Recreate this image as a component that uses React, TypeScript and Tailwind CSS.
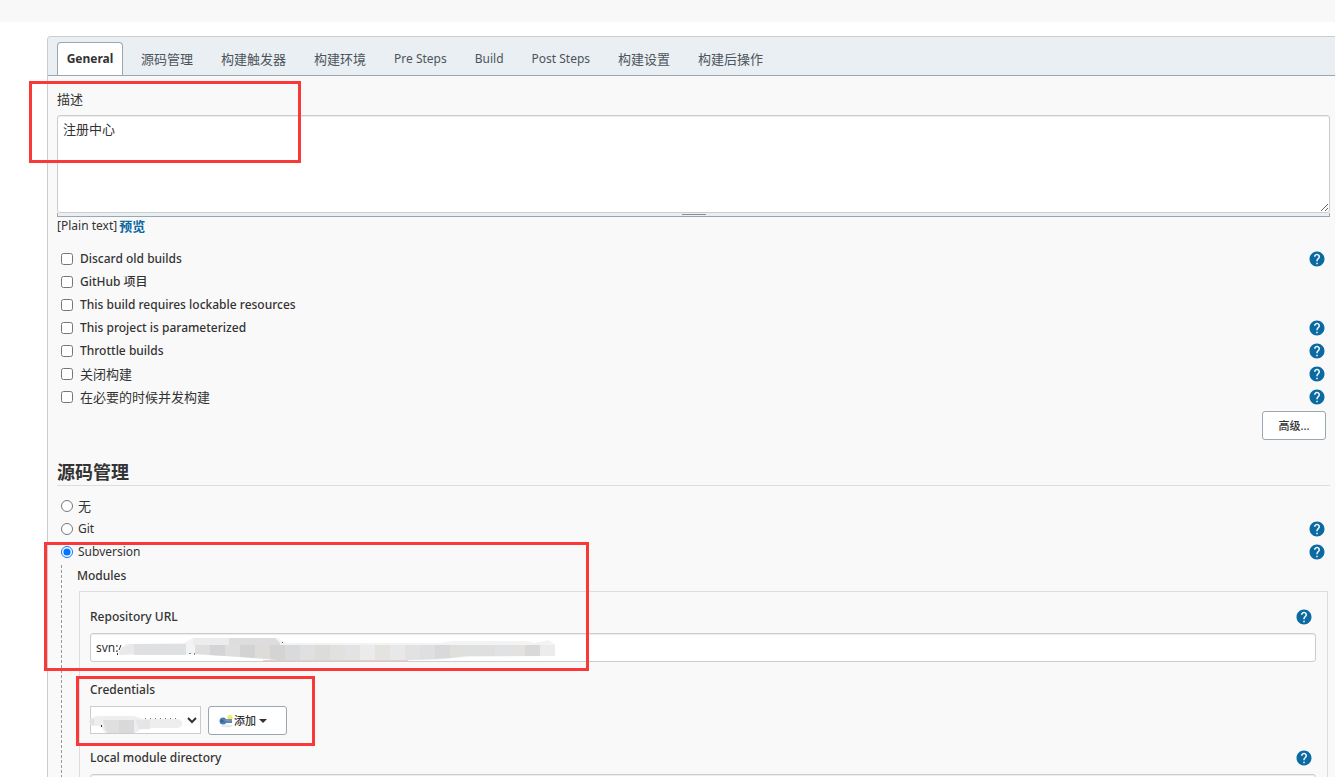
import { MdHelp } from 'react-icons/md';

const tabs = [
  { label: '源码管理', size: 'text-[13px]' },
  { label: '构建触发器', size: 'text-[13px]' },
  { label: '构建环境', size: 'text-[13px]' },
  { label: 'Pre Steps', size: 'text-xs' },
  { label: 'Build', size: 'text-xs' },
  { label: 'Post Steps', size: 'text-xs' },
  { label: '构建设置', size: 'text-[13px]' },
  { label: '构建后操作', size: 'text-[13px]' },
];

const options = [
  { id: 'discard', label: 'Discard old builds', style: 'text-xs font-medium', help: true },
  { id: 'github', label: 'GitHub 项目', style: 'text-xs font-medium', help: false },
  { id: 'lockable', label: 'This build requires lockable resources', style: 'text-xs font-medium', help: false },
  { id: 'parameterized', label: 'This project is parameterized', style: 'text-xs font-medium', help: true },
  { id: 'throttle', label: 'Throttle builds', style: 'text-xs font-medium', help: true },
  { id: 'disable', label: '关闭构建', style: 'text-[13px]', help: true },
  { id: 'concurrent', label: '在必要的时候并发构建', style: 'text-[13px]', help: true },
];

const scms = [
  { id: 'none', label: '无', size: 'text-[13px]', help: false },
  { id: 'git', label: 'Git', size: 'text-xs', help: true },
  { id: 'svn', label: 'Subversion', size: 'text-xs', help: true },
];

function HelpButton({ topic }: { topic: string }) {
  return (
    <button type="button" aria-label={`Help for ${topic}`} className="ml-auto text-[#0b6aa2]">
      <MdHelp className="block size-[18px]" />
    </button>
  );
}

function FieldLabel({ id, label, help = false }: { id: string; label: string; help?: boolean }) {
  return (
    <div className="mb-[5px] flex h-[23px] items-center pr-[3px]">
      <label htmlFor={id} className="text-xs font-medium">
        {label}
      </label>
      {help && <HelpButton topic={label} />}
    </div>
  );
}

function Tabs() {
  return (
    <div className="flex h-[39px] items-end rounded-tl border-b border-[#9aa7b0] bg-[#e9eff2] pl-[9px]">
      <button
        type="button"
        className="h-[33px] w-[66px] rounded-t border border-b-0 border-[#9aa7b0] bg-white text-xs font-bold"
      >
        General
      </button>
      <div className="flex h-[33px] items-center gap-7 pl-[18px] text-[#4d545d]">
        {tabs.map((tab) => (
          <button key={tab.label} type="button" className={tab.size}>
            {tab.label}
          </button>
        ))}
      </div>
    </div>
  );
}

function Description() {
  return (
    <div>
      <label htmlFor="description" className="flex h-[39px] items-center pt-1.5">
        描述
      </label>
      <textarea
        id="description"
        defaultValue="注册中心"
        className="block h-[98px] w-full resize rounded-[3px] border border-[#ccc] bg-white px-[5px] py-[3px] leading-5 shadow-[inset_0_1px_1px_rgba(0,0,0,0.075)]"
      />
      <div className="flex h-1 justify-center border-x border-b border-[#9aa7b0] bg-[#e9eff2]">
        <div className="mt-px h-px w-6 bg-[#888d93]" />
      </div>
      <div className="flex h-[18px] items-center gap-0.5">
        <span className="text-xs">[Plain text]</span>
        <a href="#preview" className="font-bold text-[#0b6aa2]">
          预览
        </a>
      </div>
    </div>
  );
}

function UrlMask() {
  const blocks = [
    '#dedfde', '#d4d4d6', '#dededf', '#d3d3d3', '#dddcd8', '#d4d4d4', '#d8dadb', '#e0e0e2',
    '#dcdcda', '#e0e2df', '#e3e2e5', '#ebebeb', '#e4e3e0', '#e6e8ea', '#e2e2e2', '#dfdfe1',
    '#d9d9db', '#dfdfdb', '#dee0df', '#dfdfdf', '#e1e2e4', '#e3e2e0', '#d9d9d9', '#ececec', '#eeeeee',
  ];
  return (
    <svg aria-hidden="true" className="absolute top-0 left-0" width="480" height="29" viewBox="0 0 480 29">
      <path d="M30 18 L36 11 L94 10 L103 5 L187 5 L197 10 L350 10 L364 8 L435 8 L444 10 L459 7 L465 12 L464 23 L378 24 L345 27 L200 28 L150 24 L97 21 L60 21 L30 22Z" fill="#f3f3f3" />
      <path d="M44 11h52v11H44z" fill="#dfe0e2" />
      <path d="M30 22c-4-5 6-12 14-11v10z" fill="#e9e9e9" />
      <path d="M103 5h36v7h-36z" fill="#ececec" />
      <path d="M139 5h46l5 5v3h-51z" fill="#dddddd" />
      <clipPath id="mask-edge">
        <path d="M105 12H465V23H378L360 25L345 26L300 28H200L150 24L105 21Z" />
      </clipPath>
      <g clipPath="url(#mask-edge)">
        {blocks.map((fill, i) => (
          <rect key={i} x={105 + i * 15} y="12" width="15" height="17" fill={fill} />
        ))}
      </g>
      <path d="M173 27.5h145" stroke="#f5c6c6" />
      <path d="M27.5 20v2M31 12l-2 5" stroke="#333" />
      <path d="M99 20.5h2M104.5 20v2" stroke="#5599c8" />
      <path d="M192 9.5h1" stroke="#734a9c" />
    </svg>
  );
}

function CredentialMask() {
  return (
    <svg aria-hidden="true" className="pointer-events-none absolute top-0 -left-px" width="96" height="30" viewBox="0 0 96 30">
      <path d="M56 12.5h32" stroke="#85734d" strokeDasharray="1 4" />
      <path d="M1 13c5-4 12-3 20-3h22c6 0 7 3 12 3h33c7 0 7 9 0 9H54c-5 2-5 5-10 5H18c-5 0-3-7-9-7H5c-5 0-5-4-4-7z" fill="#eeeeee" />
      <path d="M14 14h16v13H19l-3-4z" fill="#dfdfdf" />
      <path d="M30 14h15v13H30z" fill="#d9d9da" />
      <path d="M46 14h15v9H50z" fill="#e3e5e8" />
      <path d="M1 13h4v6c-5 0-5-3-4-6z" fill="#eadfe0" />
      <path d="M12.5 19v2" stroke="#333" />
    </svg>
  );
}

function KeyIcon() {
  return (
    <svg aria-hidden="true" className="size-4" viewBox="0 0 16 16">
      <ellipse cx="9" cy="13" rx="6" ry="1.5" fill="#e7e7e7" />
      <circle cx="12" cy="4.5" r="2.5" fill="#f7ec54" />
      <path d="M5 6h9v4H7z" fill="#5c86b5" />
      <circle cx="5" cy="8" r="3.5" fill="#4f7db0" />
      <circle cx="4" cy="8" r="1.5" fill="#2f5f96" />
      <path d="M7 7h7" stroke="#7fa5cb" />
    </svg>
  );
}

function Modules() {
  return (
    <div className="mt-0.5 ml-1 border-l border-dashed border-[#999] pl-[15px]">
      <div className="flex h-[21px] items-center text-xs font-medium">Modules</div>
      <div className="mt-[5px] mr-0.5 ml-0.5 border border-[#ddd] pt-[13px] pr-[11px] pb-6 pl-[10px]">
        <FieldLabel id="repository" label="Repository URL" help />
        <div className="relative">
          <input
            id="repository"
            type="text"
            defaultValue="svn:"
            className="block h-[29px] w-full rounded-[3px] border border-[#ccc] bg-white px-[5px] text-xs shadow-[inset_0_1px_1px_rgba(0,0,0,0.075)]"
          />
          <UrlMask />
        </div>

        <div className="mt-4">
          <FieldLabel id="credentials" label="Credentials" />
          <div className="flex gap-[7px]">
            <div className="relative">
              <select id="credentials" className="block h-7 w-[111px] border border-[#ccc] bg-white">
                <option> </option>
              </select>
              <CredentialMask />
            </div>
            <button
              type="button"
              className="flex h-[29px] w-[79px] items-center rounded-[3px] border border-[#9aa7b0] bg-white pl-[9px] text-[11px] font-medium"
            >
              <KeyIcon />
              添加
              <svg aria-hidden="true" className="ml-[3px] h-1 w-2" viewBox="0 0 8 4">
                <path d="M0 0h8L4 4z" fill="#333" />
              </svg>
            </button>
          </div>
        </div>

        <div className="mt-[11px]">
          <FieldLabel id="directory" label="Local module directory" help />
          <input
            id="directory"
            type="text"
            className="block h-[29px] w-full rounded-[3px] border border-[#ccc] bg-white px-[5px] text-xs shadow-[inset_0_1px_1px_rgba(0,0,0,0.075)]"
          />
        </div>
      </div>
    </div>
  );
}

export default function App() {
  return (
    <div className="relative h-screen overflow-hidden bg-white font-['Noto_Sans','Noto_Sans_CJK_SC',sans-serif] text-[13px] leading-5 text-[#333]">
      <header className="h-[22px] bg-[#f8f8f8]" />
      <main className="mt-[14px] ml-[47px] rounded-tl border-t border-l border-[#ccc] bg-[#f9f9f9]">
        <Tabs />
        <form className="pr-[5px] pb-6 pl-[9px]">
          <Description />

          <div className="mt-3">
            {options.map((option) => (
              <div key={option.id} className="flex h-[23px] items-center pr-1">
                <input id={option.id} type="checkbox" className="ml-1 size-3" />
                <label htmlFor={option.id} className={`pl-[7px] ${option.style}`}>
                  {option.label}
                </label>
                {option.help && <HelpButton topic={option.label} />}
              </div>
            ))}
          </div>

          <div className="mt-[3px] flex justify-end pr-1">
            <button
              type="button"
              className="h-[29px] w-16 rounded-[3px] border border-[#9aa7b0] bg-white text-[11px] font-medium"
            >
              高级...
            </button>
          </div>

          <h2 className="mt-[18px] flex h-7 items-center border-b border-[#ddd] text-lg font-bold">源码管理</h2>

          <div className="mt-2">
            {scms.map((scm) => (
              <div key={scm.id} className="flex h-[23px] items-center pr-1">
                <input
                  id={scm.id}
                  type="radio"
                  name="scm"
                  defaultChecked={scm.id === 'svn'}
                  className="ml-1 size-3"
                />
                <label htmlFor={scm.id} className={`pl-[5px] ${scm.size}`}>
                  {scm.label}
                </label>
                {scm.help && <HelpButton topic={scm.label} />}
              </div>
            ))}
          </div>
          <Modules />
        </form>
      </main>

      {/* callouts drawn over the form */}
      <div className="pointer-events-none absolute top-[81px] left-[29px] h-[82px] w-[272px] border-3 border-[#fb3838]" />
      <div className="pointer-events-none absolute top-[542px] left-[44px] h-[129px] w-[545px] border-3 border-[#fb3838]" />
      <div className="pointer-events-none absolute top-[676px] left-[76px] h-[70px] w-[239px] border-3 border-[#fb3838]" />
    </div>
  );
}
